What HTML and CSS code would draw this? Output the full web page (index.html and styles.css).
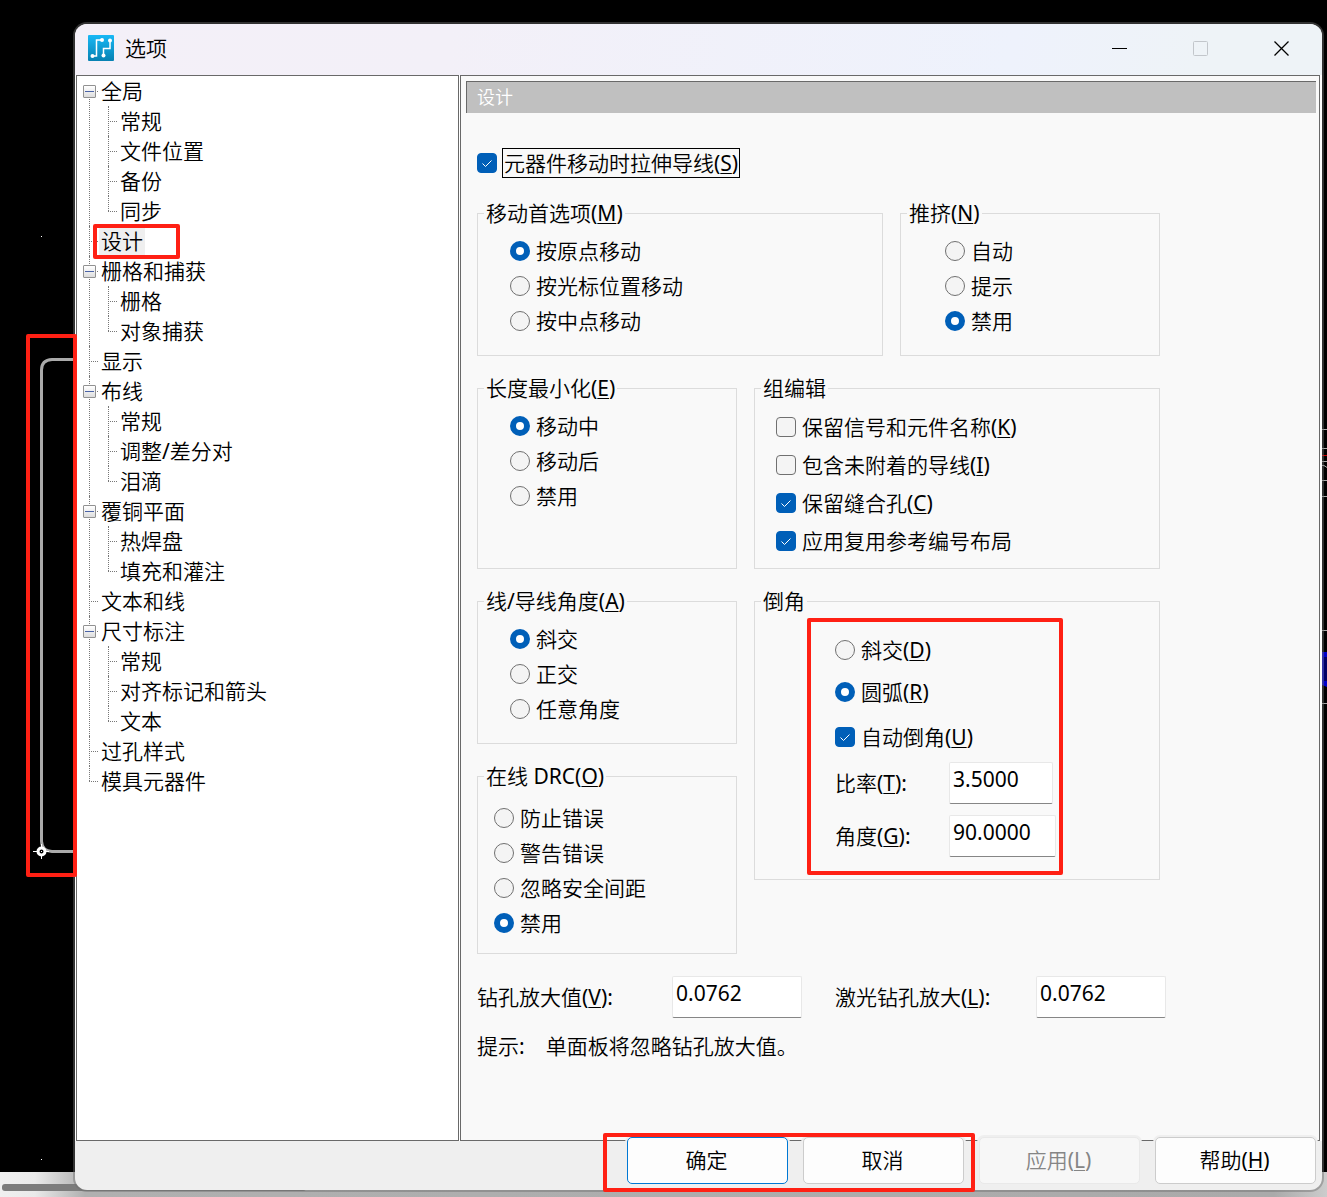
FILE: index.html
```html
<!DOCTYPE html>
<html lang="zh-CN">
<head>
<meta charset="utf-8">
<meta name="viewport" content="width=device-width, initial-scale=1">
<title>选项</title>
<link rel="stylesheet" href="styles.css">
</head>
<body>
<div class="desktop">
  <svg class="board" width="75" height="1172" viewBox="0 0 75 1172" aria-hidden="true">
    <path d="M75 359.500H52Q41.500 360 41.500 370V841Q42 851 52 851.500H75" fill="none" stroke="#aaa" stroke-width="3"/>
    <path d="M33 851.500H49M41.500 844V859" stroke="#fff" stroke-width="1"/>
    <circle cx="41.500" cy="851.500" r="3.500" fill="#000" stroke="#fff" stroke-width="3"/>
    <rect x="41" y="851" width="1" height="1" fill="#fff"/>
    <rect x="41" y="236" width="1" height="1" fill="#fff"/>
    <rect x="41" y="1159" width="1" height="1" fill="#fff"/>
  </svg>
  <svg class="board-right" width="5" height="300" viewBox="0 0 5 300" aria-hidden="true">
    <path d="M0 29.500H5M0 48.500H5M0 61.500H5M0 80.500H5M0 96.500H5M0 230.500H5M0 303.500H5" stroke="#aaa"/>
    <path d="M0 65.500H2L5 67.500" stroke="#aaa" fill="none"/>
    <path d="M0 55.500H5" stroke="#c00"/>
    <path d="M0 252H5V287L0 285Z" fill="#00c"/>
    <path d="M2 257H5V281H2Z" fill="#006"/>
  </svg>
  <div class="strip"><div class="scroll-thumb"></div></div>

  <main class="dialog">
    <header class="titlebar">
      <svg class="logo" width="26" height="26" viewBox="0 0 26 26" aria-hidden="true">
        <defs><linearGradient id="logo-fill" x1="0" y1="0" x2="0" y2="1"><stop offset="0" stop-color="#18b8f5"/><stop offset="1" stop-color="#0781b2"/></linearGradient></defs>
        <rect width="26" height="26" rx="1" fill="url(#logo-fill)"/>
        <path d="M4.500 21H8.500V5H14M15.500 20.500V13.500H22V5.500" fill="none" stroke="#fff" stroke-width="1.500"/>
        <g fill="#fff"><circle cx="4.500" cy="21" r="2"/><circle cx="14" cy="5" r="2"/><circle cx="15.500" cy="20.500" r="2"/><circle cx="22" cy="5.500" r="2"/></g>
      </svg>
      <h1 class="title">选项</h1>
      <button class="win-btn" type="button" aria-label="最小化"><svg width="15" height="15" viewBox="0 0 15 15"><path d="M0 7.500H15" stroke="#000"/></svg></button>
      <button class="win-btn" type="button" aria-label="最大化" disabled><svg width="15" height="15" viewBox="0 0 15 15"><rect x=".5" y=".5" width="14" height="14" rx="1" fill="none" stroke="#c2c6cb"/></svg></button>
      <button class="win-btn" type="button" aria-label="关闭"><svg width="15" height="15" viewBox="0 0 15 15"><path d="M.5 .5L14.500 14.500M14.500 .5L.5 14.500" stroke="#000" stroke-width="1.300"/></svg></button>
    </header>

    <div class="panes">
      <nav class="tree-pane">
        <ul class="tree">
          <li><div class="row"><button class="toggle" type="button" aria-label="折叠"></button><a href="#">全局</a></div>
            <ul>
              <li><div class="row"><a href="#">常规</a></div></li>
              <li><div class="row"><a href="#">文件位置</a></div></li>
              <li><div class="row"><a href="#">备份</a></div></li>
              <li><div class="row"><a href="#">同步</a></div></li>
            </ul></li>
          <li><div class="row"><a class="selected" href="#">设计</a><span class="mark mark-tree"></span></div></li>
          <li><div class="row"><button class="toggle" type="button" aria-label="折叠"></button><a href="#">栅格和捕获</a></div>
            <ul>
              <li><div class="row"><a href="#">栅格</a></div></li>
              <li><div class="row"><a href="#">对象捕获</a></div></li>
            </ul></li>
          <li><div class="row"><a href="#">显示</a></div></li>
          <li><div class="row"><button class="toggle" type="button" aria-label="折叠"></button><a href="#">布线</a></div>
            <ul>
              <li><div class="row"><a href="#">常规</a></div></li>
              <li><div class="row"><a href="#">调整/差分对</a></div></li>
              <li><div class="row"><a href="#">泪滴</a></div></li>
            </ul></li>
          <li><div class="row"><button class="toggle" type="button" aria-label="折叠"></button><a href="#">覆铜平面</a></div>
            <ul>
              <li><div class="row"><a href="#">热焊盘</a></div></li>
              <li><div class="row"><a href="#">填充和灌注</a></div></li>
            </ul></li>
          <li><div class="row"><a href="#">文本和线</a></div></li>
          <li><div class="row"><button class="toggle" type="button" aria-label="折叠"></button><a href="#">尺寸标注</a></div>
            <ul>
              <li><div class="row"><a href="#">常规</a></div></li>
              <li><div class="row"><a href="#">对齐标记和箭头</a></div></li>
              <li><div class="row"><a href="#">文本</a></div></li>
            </ul></li>
          <li><div class="row"><a href="#">过孔样式</a></div></li>
          <li><div class="row"><a href="#">模具元器件</a></div></li>
        </ul>
      </nav>

      <section class="page">
        <h2 class="page-title">设计</h2>
        <form class="form" id="design">
          <label class="opt stretch"><input type="checkbox" checked><span class="focused">元器件移动时拉伸导线(<u>S</u>)</span></label>

          <div class="groups wide-narrow">
            <fieldset>
              <legend>移动首选项(<u>M</u>)</legend>
              <div class="options indent-m">
                <label class="opt"><input type="radio" name="move" checked>按原点移动</label>
                <label class="opt"><input type="radio" name="move">按光标位置移动</label>
                <label class="opt"><input type="radio" name="move">按中点移动</label>
              </div>
            </fieldset>
            <fieldset>
              <legend>推挤(<u>N</u>)</legend>
              <div class="options indent-l">
                <label class="opt"><input type="radio" name="push">自动</label>
                <label class="opt"><input type="radio" name="push">提示</label>
                <label class="opt"><input type="radio" name="push" checked>禁用</label>
              </div>
            </fieldset>
          </div>

          <div class="groups narrow-wide">
            <fieldset>
              <legend>长度最小化(<u>E</u>)</legend>
              <div class="options indent-m">
                <label class="opt"><input type="radio" name="len" checked>移动中</label>
                <label class="opt"><input type="radio" name="len">移动后</label>
                <label class="opt"><input type="radio" name="len">禁用</label>
              </div>
            </fieldset>
            <fieldset>
              <legend>组编辑</legend>
              <div class="options checks">
                <label class="opt"><input type="checkbox"><span>保留信号和元件名称(<u>K</u>)</span></label>
                <label class="opt"><input type="checkbox"><span>包含未附着的导线(<u>I</u>)</span></label>
                <label class="opt"><input type="checkbox" checked><span>保留缝合孔(<u>C</u>)</span></label>
                <label class="opt"><input type="checkbox" checked><span>应用复用参考编号布局</span></label>
              </div>
            </fieldset>
          </div>

          <div class="groups narrow-wide">
            <div class="stack">
              <fieldset>
                <legend>线/导线角度(<u>A</u>)</legend>
                <div class="options indent-m">
                  <label class="opt"><input type="radio" name="angle" checked>斜交</label>
                  <label class="opt"><input type="radio" name="angle">正交</label>
                  <label class="opt"><input type="radio" name="angle">任意角度</label>
                </div>
              </fieldset>
              <fieldset>
                <legend>在线 DRC(<u>O</u>)</legend>
                <div class="options drc">
                  <label class="opt"><input type="radio" name="drc">防止错误</label>
                  <label class="opt"><input type="radio" name="drc">警告错误</label>
                  <label class="opt"><input type="radio" name="drc">忽略安全间距</label>
                  <label class="opt"><input type="radio" name="drc" checked>禁用</label>
                </div>
              </fieldset>
            </div>
            <fieldset class="corner">
              <legend>倒角</legend>
              <div class="corner-fields">
                <label class="opt"><input type="radio" name="corner"><span>斜交(<u>D</u>)</span></label>
                <label class="opt"><input type="radio" name="corner" checked><span>圆弧(<u>R</u>)</span></label>
                <label class="opt auto"><input type="checkbox" checked><span>自动倒角(<u>U</u>)</span></label>
                <div class="field"><label for="ratio">比率(<u>T</u>):</label><input class="text ratio" id="ratio" type="text" value="3.5000"></div>
                <div class="field"><label for="deg">角度(<u>G</u>):</label><input class="text" id="deg" type="text" value="90.0000"></div>
                <span class="mark mark-corner"></span>
              </div>
            </fieldset>
          </div>

          <div class="drill">
            <label for="drill">钻孔放大值(<u>V</u>):</label><input class="text" id="drill" type="text" value="0.0762">
            <label class="second" for="laser">激光钻孔放大(<u>L</u>):</label><input class="text" id="laser" type="text" value="0.0762">
          </div>
          <p class="hint"><span>提示:</span><span>单面板将忽略钻孔放大值。</span></p>
        </form>
      </section>
    </div>

    <footer class="actions">
      <div class="confirm">
        <button class="btn default" type="submit" form="design">确定</button>
        <button class="btn" type="button">取消</button>
        <span class="mark mark-confirm"></span>
      </div>
      <button class="btn" type="button" disabled>应用(<u>L</u>)</button>
      <button class="btn" type="button">帮助(<u>H</u>)</button>
    </footer>
  </main>
  <span class="mark mark-board"></span>
</div>
</body>
</html>
```
FILE: styles.css
```css
* { box-sizing: border-box; }

body {
  margin: 0;
  background: #000;
  color: #000;
  font: 21px/28px "Noto Sans", "Noto Sans CJK SC DemiLight", "Noto Sans CJK SC", sans-serif;
}

button, input { font: inherit; color: inherit; }
u { text-underline-offset: 2px; text-decoration-thickness: 1px; }

.desktop {
  position: relative;
  display: flex;
  min-height: 100vh;
  padding: 24px 5px 7px 75px;
}

.board { position: absolute; left: 0; top: 0; }
.board-right { position: absolute; right: 0; top: 400px; overflow: visible; }

.strip {
  position: absolute;
  left: 0;
  right: 0;
  bottom: 0;
  height: 25px;
  background: linear-gradient(90deg, #f0f0f0, #eaeaea 35px, #b0b0b0 85px, #aaa 96%, #ccc);
}
.scroll-thumb {
  width: 304px;
  height: 7px;
  margin: 12px 0 0 2px;
  border-radius: 3px;
  background: #7c7c7c;
}

/* Red call-out frames */
.mark {
  position: absolute;
  border: 4px solid #ff2014;
  border-radius: 2px;
  pointer-events: none;
}
.mark-board { left: 26px; top: 334px; width: 51px; height: 543px; }
.mark-tree { left: 16px; top: -2px; width: 87px; height: 35px; }
.mark-corner { inset: -11px -7px -18px -28px; }
.mark-confirm { inset: -4px -11px -8px -24px; }

/* Window */
.dialog {
  position: relative;
  flex: 1;
  min-width: 0;
  display: flex;
  flex-direction: column;
  border-radius: 12px;
  background: #efefef;
  box-shadow: 0 0 0 2px rgba(110, 110, 110, .45);
}
.titlebar {
  display: flex;
  align-items: center;
  height: 51px;
  padding: 0 0 3px 13px;
  border-radius: 12px 12px 0 0;
  background: linear-gradient(100deg, #f4f0f8, #f3f0f8 30%, #eef2fc 75%, #eef3f7 90%);
}
.title { flex: 1; margin: 0 0 0 11px; font-size: 21px; font-weight: 400; line-height: 26px; }
.win-btn {
  display: grid;
  place-items: center;
  width: 81px;
  height: 48px;
  padding: 0;
  border: 0;
  background: none;
}

.panes { flex: 1; display: flex; gap: 1px; padding: 0 2px 0 1px; background: #fff; }
.tree-pane { flex: 0 0 383px; border: 1px solid #696969; background: #fff; }
.page { flex: 1; min-width: 0; padding: 5px 3px 0 5px; border: 1px solid #696969; background: #f9f9f9; }

/* Tree */
.tree, .tree ul { margin: 0; padding: 0; list-style: none; }
.tree li { position: relative; }
.row { position: relative; display: flex; align-items: center; height: 30px; padding-left: 22px; }
.row:has(.toggle) { gap: 3px; padding-left: 6px; }
.tree ul .row { padding-left: 41px; }
.row a { padding: 0 2px; color: inherit; text-decoration: none; }
.row .selected { background: #efefef; }
.toggle {
  width: 13px;
  height: 13px;
  margin-top: 1px;
  padding: 0;
  border: 1px solid #919191;
  border-radius: 1px;
  background: linear-gradient(#4b63a7, #4b63a7) center / 9px 1px no-repeat, linear-gradient(#fff, #ddd);
  z-index: 1;
}
.tree li::before {
  content: "";
  position: absolute;
  left: 12px;
  top: 0;
  bottom: 0;
  border-left: 1px dotted #777;
}
.tree > li:first-child::before { top: 15px; }
.tree li:last-child::before { bottom: auto; height: 15px; }
.tree ul li::before { left: 31px; }
.row::before {
  content: "";
  position: absolute;
  left: 12px;
  top: 15px;
  width: 9px;
  border-top: 1px dotted #777;
}
.tree ul .row::before { left: 31px; }

/* Page */
.page-title {
  height: 32px;
  margin: 0;
  padding-left: 10px;
  border: solid #696969;
  border-width: 1px 0 0 1px;
  background: #c0c0c0;
  color: #fff;
  font-size: 18px;
  font-weight: 500;
  line-height: 31px;
}
.form { display: flex; flex-direction: column; padding: 35px 11px 16px; }
.groups { display: grid; gap: 17px; max-width: 683px; margin-bottom: 18px; }
.wide-narrow { grid-template-columns: 406fr 260fr; }
.narrow-wide { grid-template-columns: 260fr 406fr; }
.stack { display: flex; flex-direction: column; gap: 18px; }
.corner { align-self: start; }

fieldset { min-width: 0; margin: 0; padding: 0 6px; border: 1px solid #dcdcdc; }
legend { padding: 0 2px; }
.options { padding: 6px 0 17px; }
.indent-m { padding-left: 26px; }
.indent-l { padding-left: 38px; }
.checks { padding: 6px 0 8px 15px; }
.drc { padding: 10px 0 13px 10px; }

.opt { display: flex; align-items: center; gap: 6px; height: 35px; }
.checks .opt { height: 38px; }
.stretch { gap: 5px; height: 30px; margin-bottom: 21px; align-self: flex-start; }
.focused { height: 30px; padding: 0 1px; border: 1px solid #000; }

input[type="radio"], input[type="checkbox"] {
  appearance: none;
  flex: none;
  width: 20px;
  height: 20px;
  margin: 0;
  border: 1px solid #707070;
  border-radius: 4px;
  background: #f4f4f4;
}
input[type="radio"] { border-radius: 50%; }
input[type="radio"]:checked { border: 6px solid #005fb8; background: #fff; }
input[type="checkbox"]:checked {
  border-color: #005fb8;
  background: #005fb8 url('data:image/svg+xml,<svg xmlns="http://www.w3.org/2000/svg" viewBox="0 0 18 18"><path d="M4.500 9.500L7.500 12.500L13.500 6.500" fill="none" stroke="white"/></svg>');
}

.text {
  width: 100%;
  height: 42px;
  padding: 0 3px 8px;
  border: 1px solid #e8e8e8;
  border-bottom-color: #868686;
  border-radius: 2px;
  background: #fff;
}

.corner-fields { position: relative; width: 221px; margin: 14px 0 22px 74px; }
.corner-fields .opt { height: 42px; }
.corner-fields .auto { height: 48px; margin-bottom: 1px; }
.field { display: grid; grid-template-columns: 114px 1fr; align-items: center; }
.field + .field { margin-top: 11px; }
.ratio { width: 104px; }

.drill {
  display: grid;
  grid-template-columns: 195fr 130fr 234fr 130fr;
  align-items: center;
  max-width: 689px;
  margin-top: 4px;
}
.second { padding-left: 33px; }
.hint { display: flex; gap: 21px; margin: 14px 0 0; }

/* Buttons */
.actions {
  position: relative;
  display: flex;
  justify-content: flex-end;
  gap: 15px;
  margin-top: -4px;
  padding: 0 6px 6px;
}
.confirm { position: relative; display: flex; gap: 15px; }
.btn {
  width: 161px;
  height: 47px;
  padding: 0 2px 2px 0;
  border: 1px solid #ccc;
  border-radius: 5px;
  background: #fdfdfd;
  box-shadow: 0 0 0 2px #efefef;
}
.default { border-color: #0078d4; }
.btn:disabled { border-color: #e9e9e9; background: #f7f7f7; color: #858585; }
```
